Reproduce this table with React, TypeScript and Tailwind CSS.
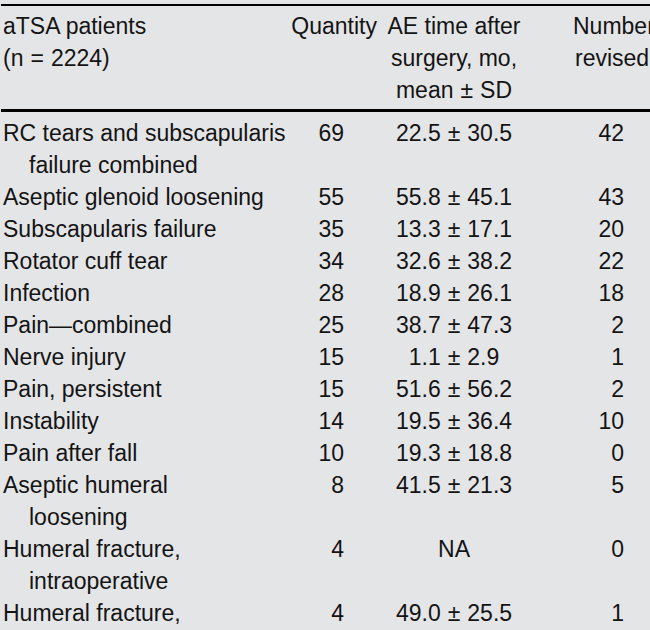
const rows: { label: string[]; qty: string; ae: [string, string] | string; revised: string }[] = [
  { label: ["RC tears and subscapularis", "failure combined"], qty: "69", ae: ["22.5", "30.5"], revised: "42" },
  { label: ["Aseptic glenoid loosening"], qty: "55", ae: ["55.8", "45.1"], revised: "43" },
  { label: ["Subscapularis failure"], qty: "35", ae: ["13.3", "17.1"], revised: "20" },
  { label: ["Rotator cuff tear"], qty: "34", ae: ["32.6", "38.2"], revised: "22" },
  { label: ["Infection"], qty: "28", ae: ["18.9", "26.1"], revised: "18" },
  { label: ["Pain\u2014combined"], qty: "25", ae: ["38.7", "47.3"], revised: "2" },
  { label: ["Nerve injury"], qty: "15", ae: ["1.1", "2.9"], revised: "1" },
  { label: ["Pain, persistent"], qty: "15", ae: ["51.6", "56.2"], revised: "2" },
  { label: ["Instability"], qty: "14", ae: ["19.5", "36.4"], revised: "10" },
  { label: ["Pain after fall"], qty: "10", ae: ["19.3", "18.8"], revised: "0" },
  { label: ["Aseptic humeral", "loosening"], qty: "8", ae: ["41.5", "21.3"], revised: "5" },
  { label: ["Humeral fracture,", "intraoperative"], qty: "4", ae: "NA", revised: "0" },
  { label: ["Humeral fracture,"], qty: "4", ae: ["49.0", "25.5"], revised: "1" },
];

const cols = "grid grid-cols-[282px_98px_146px_1fr]";

// math operators in the source are set wider, with more room either side
function Op({ c }: { c: string }) {
  return <span className="mx-[7px]">{c}</span>;
}

export default function App() {
  return (
    <div
      className="h-[630px] w-[650px] overflow-hidden bg-[#e4e5e7] pt-[4px] text-[23px] leading-[32px] text-[#141414]"
      style={{ fontFamily: '"Liberation Sans", Arial, sans-serif' }}
    >
      <div className="ml-[1px] border-t-2 border-black">
        {/* Header */}
        <div className={`${cols} border-b-[3px] border-black pt-[4px] pb-[3px]`}>
          <div className="pl-[2px]">
            aTSA patients
            <br />
            (n<Op c="=" />2224)
          </div>
          <div className="pr-[4px] text-right">Quantity</div>
          <div className="text-center">
            AE time after
            <br />
            surgery, mo,
            <br />
            mean<Op c="±" />SD
          </div>
          <div className="whitespace-nowrap pl-[46px]">
            Number
            <br />
            <span className="pl-[2px]">revised</span>
          </div>
        </div>

        {/* Body */}
        <div className="pt-[5px]">
          {rows.map((r, i) => (
            <div key={i} className={cols}>
              <div className="pl-[2px]">
                {r.label.map((l, j) => (
                  <div key={j} className={`whitespace-nowrap ${j > 0 ? "pl-[26px]" : ""}`}>
                    {l}
                  </div>
                ))}
              </div>
              <div className="pr-[37px] text-right">{r.qty}</div>
              <div className="whitespace-nowrap text-center">
                {typeof r.ae === "string" ? (
                  r.ae
                ) : (
                  <>
                    {r.ae[0]}
                    <Op c="±" />
                    {r.ae[1]}
                  </>
                )}
              </div>
              <div className="pr-[26px] text-right">{r.revised}</div>
            </div>
          ))}
        </div>
      </div>
    </div>
  );
}
